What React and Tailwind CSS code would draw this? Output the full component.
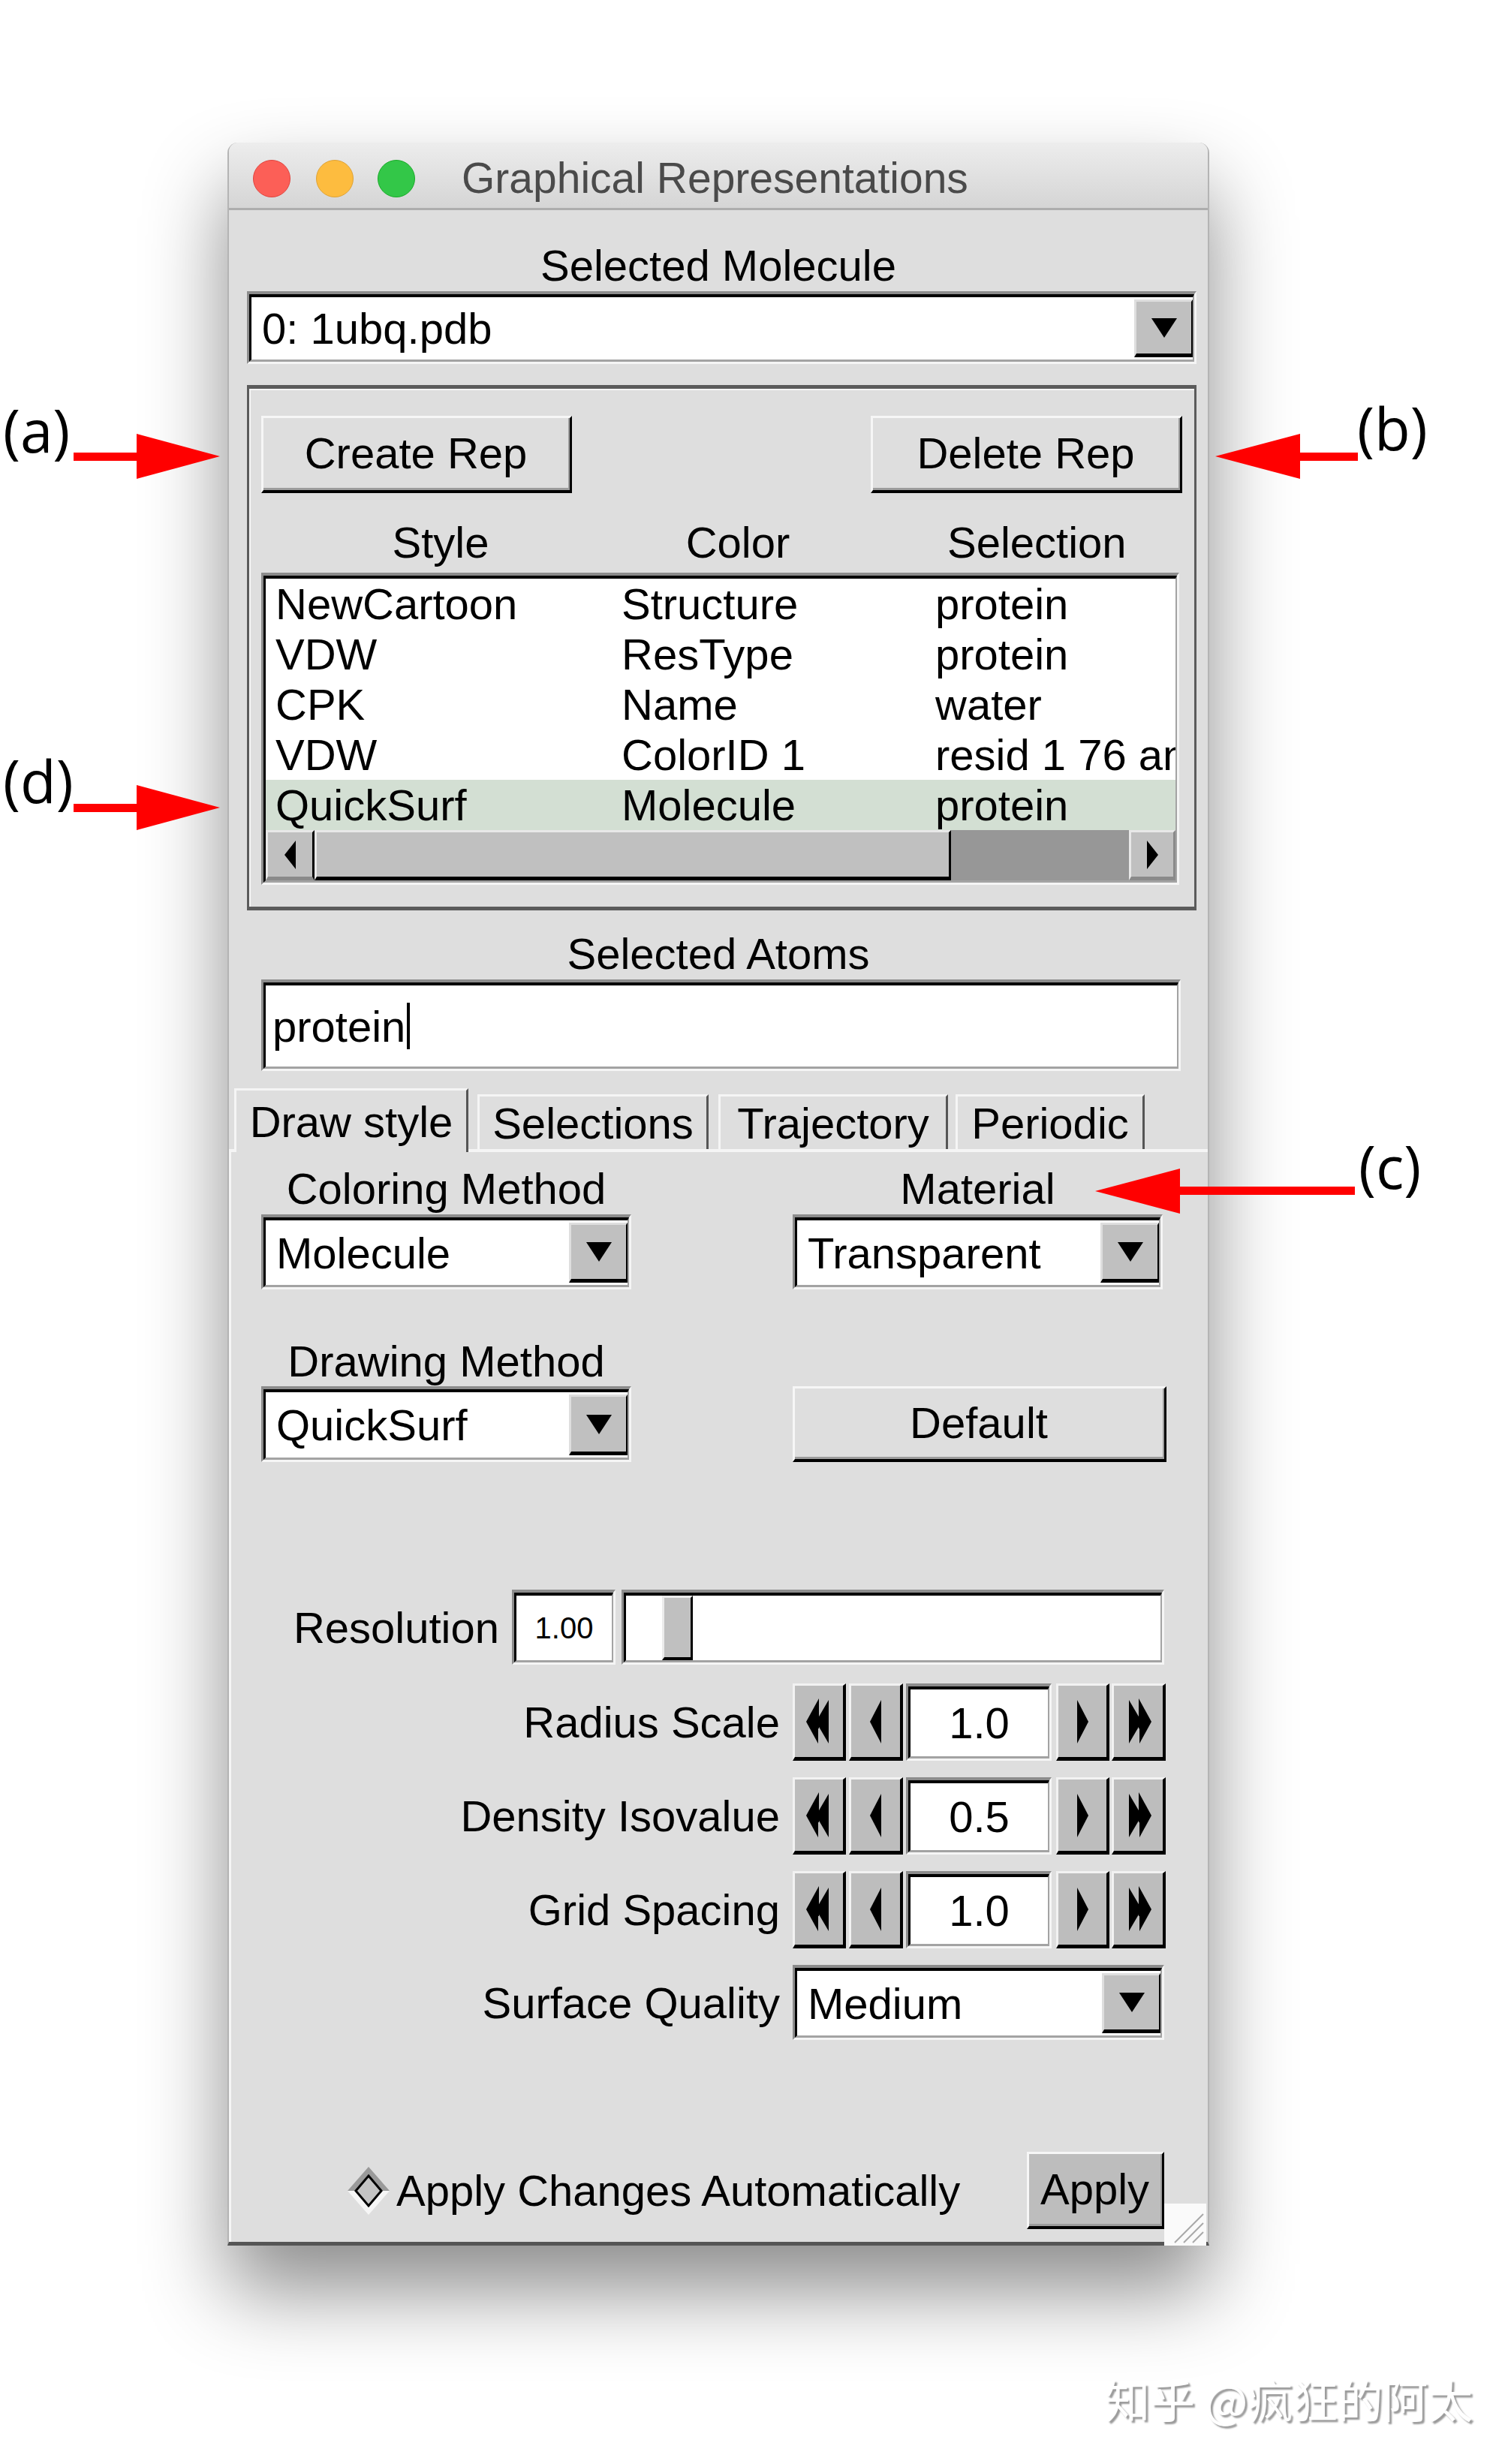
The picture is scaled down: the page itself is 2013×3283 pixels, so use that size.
import React from "react";

const FONT = "font-['Liberation_Sans','Arial',sans-serif]";

// sunken X11-style field: grey/black on top-left, light on bottom-right
function Sunken({ className = "", inner = "", children }) {
  return (
    <div
      className={`border-t-[4px] border-l-[3px] border-b-[3px] border-r-[3px] border-t-[#8c8c8c] border-l-[#8c8c8c] border-b-[#f5f5f5] border-r-[#f5f5f5] ${className}`}
    >
      <div
        className={`h-full border-t-[4px] border-l-[3px] border-b-[3px] border-r-[2px] border-t-black border-l-black border-b-[#a3a3a3] border-r-[#a3a3a3] bg-white ${inner}`}
      >
        {children}
      </div>
    </div>
  );
}

function Raised({ className = "", children }) {
  return (
    <div
      className={`border-t-[3px] border-l-[3px] border-b-[4px] border-r-[3px] border-t-[#f6f6f6] border-l-[#f6f6f6] border-b-black border-r-black ${className}`}
    >
      <div className="flex h-full items-center justify-center border-b-[3px] border-r-[2px] border-b-[#9c9c9c] border-r-[#9c9c9c]">
        {children}
      </div>
    </div>
  );
}

function DropBtn() {
  return (
    <div className="my-[3px] flex w-[78px] shrink-0 items-center justify-center border-t-[3px] border-l-[3px] border-b-[5px] border-r-[2px] border-t-[#dedede] border-l-[#dedede] border-b-black border-r-black bg-[#c0c0c0]">
      <svg width="34" height="26" viewBox="0 0 34 26">
        <polygon points="0,0 34,0 17,26" fill="#000" />
      </svg>
    </div>
  );
}

function Dropdown({ value, className = "" }) {
  return (
    <Sunken className={className} inner="flex items-stretch">
      <div className="flex flex-1 items-center overflow-hidden whitespace-nowrap pl-[14px]">{value}</div>
      <DropBtn />
    </Sunken>
  );
}

function SpinBtn({ className = "", children }) {
  return (
    <div
      className={`flex h-full items-center justify-center border-t-[3px] border-l-[3px] border-b-[5px] border-r-[4px] border-t-[#f2f2f2] border-l-[#f2f2f2] border-b-black border-r-black bg-[#bdbdbd] ${className}`}
    >
      {children}
    </div>
  );
}

const DblLeft = () => (
  <svg width="34" height="66" viewBox="0 0 34 66">
    <polygon points="0,33 17,2 17,64" fill="#000" />
    <polygon points="13,33 30,4 30,62" fill="#000" />
    <rect x="16" y="42" width="2" height="22" fill="#bdbdbd" />
  </svg>
);
const Left = () => (
  <svg width="16" height="66" viewBox="0 0 16 66">
    <polygon points="0,33 15,4 15,62" fill="#000" />
  </svg>
);
const Right = () => (
  <svg width="16" height="66" viewBox="0 0 16 66">
    <polygon points="16,33 1,4 1,62" fill="#000" />
  </svg>
);
const DblRight = () => (
  <svg width="34" height="66" viewBox="0 0 34 66">
    <polygon points="34,33 17,2 17,64" fill="#000" />
    <polygon points="21,33 4,4 4,62" fill="#000" />
    <rect x="16" y="42" width="2" height="22" fill="#bdbdbd" />
  </svg>
);

function Spinner({ label, value }) {
  return (
    <div className="flex h-[103px] items-center justify-end pr-[56px]">
      <span className="mr-[17px]">{label}</span>
      <div className="flex h-full w-[497px] items-stretch">
        <SpinBtn className="w-[71px]"><DblLeft /></SpinBtn>
        <SpinBtn className="ml-[4px] w-[72px]"><Left /></SpinBtn>
        <Sunken className="ml-[4px] w-[194px]" inner="flex items-center justify-center">
          {value}
        </Sunken>
        <SpinBtn className="ml-[6px] w-[71px]"><Right /></SpinBtn>
        <SpinBtn className="ml-[3px] w-[72px]"><DblRight /></SpinBtn>
      </div>
    </div>
  );
}

function RightArrow({ className }) {
  return (
    <svg className={className} width="195" height="60" viewBox="0 0 195 60">
      <rect x="0" y="25" width="86" height="11" fill="#ff0000" />
      <polygon points="84,0 195,30 84,60" fill="#ff0000" />
    </svg>
  );
}

const rows = [
  ["NewCartoon", "Structure", "protein"],
  ["VDW", "ResType", "protein"],
  ["CPK", "Name", "water"],
  ["VDW", "ColorID 1", "resid 1 76 and name CA"],
  ["QuickSurf", "Molecule", "protein"],
];

export default function App() {
  return (
    <div className={`relative h-[3283px] w-[2013px] overflow-hidden bg-white text-[58px] leading-[67px] text-black ${FONT}`}>
      <div className="pl-[303px] pt-[190px]">
        <div className="relative flex h-[2802px] w-[1308px] flex-col rounded-t-[14px] border-x-2 border-b-[5px] border-x-[#b4b4b4] border-b-[#555] bg-[#dedede] shadow-[0_60px_110px_rgba(0,0,0,0.45)]">
          {/* title bar */}
          <div className="flex h-[90px] shrink-0 items-center rounded-t-[12px] border-b-[3px] border-[#adadad] bg-linear-to-b from-[#ededed] to-[#d5d5d5] pl-[32px] pt-[8px]">
            <div className="h-[50px] w-[50px] rounded-full border border-[#e0443e] bg-[#fc5f57]" />
            <div className="ml-[34px] h-[50px] w-[50px] rounded-full border border-[#dea236] bg-[#fdbc3f]" />
            <div className="ml-[32px] h-[50px] w-[50px] rounded-full border border-[#1aab29] bg-[#33c748]" />
            <span className="ml-[62px] text-[57px] text-[#4a4a4a]">Graphical Representations</span>
          </div>

          <div className="mt-[40px] text-center">Selected Molecule</div>
          <Dropdown value="0: 1ubq.pdb" className="ml-[24px] mt-[1px] h-[97px] w-[1265px]" />

          {/* rep group */}
          <div className="ml-[24px] mt-[28px] h-[700px] w-[1265px] border-t-[5px] border-b-[5px] border-l-[3px] border-r-[3px] border-[#5b5b5b]">
            <div className="h-full border-t-2 border-l-2 border-[#f5f5f5] pt-[34px]">
              <div className="flex justify-between pl-[14px] pr-[16px]">
                <Raised className="h-[103px] w-[414px]">Create Rep</Raised>
                <Raised className="h-[103px] w-[415px]">Delete Rep</Raised>
              </div>
              <div className="ml-[14px] mt-[32px] flex">
                <div className="w-[478px] text-center">Style</div>
                <div className="w-[314px] text-center">Color</div>
                <div className="pl-[122px]">Selection</div>
              </div>
              <Sunken className="ml-[14px] mt-[7px] w-[1223px]" inner="flex flex-col overflow-hidden">
                {rows.map(([s, c, sel], i) => (
                  <div
                    key={i}
                    className={`grid h-[67px] grid-cols-[461px_418px_1fr] whitespace-nowrap pl-[13px] ${i === 4 ? "bg-[#d3dfd3]" : ""}`}
                  >
                    <span>{s}</span>
                    <span>{c}</span>
                    <span className="overflow-hidden">{sel}</span>
                  </div>
                ))}
                <div className="flex h-[67px] bg-[#979797]">
                  <div className="flex w-[65px] items-center justify-center border-t-[3px] border-l-[3px] border-b-[5px] border-r-[3px] border-t-[#e8e8e8] border-l-[#e8e8e8] border-b-[#8a8a8a] border-r-black bg-[#c0c0c0]">
                    <svg width="16" height="38" viewBox="0 0 16 38"><polygon points="0,19 15,0 15,38" fill="#000" /></svg>
                  </div>
                  <div className="w-[848px] border-t-[3px] border-l-[3px] border-b-[5px] border-r-[3px] border-t-[#e8e8e8] border-l-[#e8e8e8] border-b-black border-r-black bg-[#c0c0c0]" />
                  <div className="flex-1" />
                  <div className="flex w-[62px] items-center justify-center border-t-[3px] border-l-[3px] border-b-[5px] border-r-[3px] border-t-[#e8e8e8] border-l-[#e8e8e8] border-b-[#8a8a8a] border-r-[#8a8a8a] bg-[#c0c0c0]">
                    <svg width="16" height="38" viewBox="0 0 16 38"><polygon points="16,19 1,0 1,38" fill="#000" /></svg>
                  </div>
                </div>
              </Sunken>
            </div>
          </div>

          <div className="mt-[24px] text-center">Selected Atoms</div>
          <Sunken className="ml-[43px] mt-[1px] h-[122px] w-[1225px]" inner="flex items-center pl-[9px]">
            <span>protein</span>
            <span className="ml-[2px] h-[62px] w-[4px] bg-black" />
          </Sunken>

          {/* tabs */}
          <div className="mt-[23px] flex items-end border-b-[4px] border-[#f5f5f5] pl-[7px]">
            <div className="relative z-10 -mb-[4px] flex h-[85px] w-[312px] items-center justify-center border-t-[3px] border-l-[3px] border-r-[3px] border-t-[#f5f5f5] border-l-[#f5f5f5] border-r-[#555] bg-[#dedede]">
              Draw style
            </div>
            <div className="ml-[12px] flex h-[73px] w-[308px] items-center justify-center border-t-[3px] border-l-[3px] border-r-[3px] border-t-[#f5f5f5] border-l-[#f5f5f5] border-r-[#555]">
              Selections
            </div>
            <div className="ml-[13px] flex h-[73px] w-[306px] items-center justify-center border-t-[3px] border-l-[3px] border-r-[3px] border-t-[#f5f5f5] border-l-[#f5f5f5] border-r-[#555]">
              Trajectory
            </div>
            <div className="ml-[10px] flex h-[73px] w-[252px] items-center justify-center border-t-[3px] border-l-[3px] border-r-[3px] border-t-[#f5f5f5] border-l-[#f5f5f5] border-r-[#555]">
              Periodic
            </div>
          </div>

          <div className="flex flex-1 flex-col border-l-[3px] border-[#f5f5f5]">
            <div className="mt-[15px] grid grid-cols-[493px_493px] gap-x-[215px] pl-[40px]">
              <div className="text-center">Coloring Method</div>
              <div className="text-center">Material</div>
              <Dropdown value="Molecule" className="mt-[1px] h-[100px]" />
              <Dropdown value="Transparent" className="mt-[1px] h-[100px]" />
              <div className="mt-[62px] text-center">Drawing Method</div>
              <div />
              <Dropdown value="QuickSurf" className="h-[101px]" />
              <Raised className="h-[101px] w-[498px]">Default</Raised>
            </div>

            {/* resolution */}
            <div className="mt-[170px] flex h-[100px] items-center justify-end pr-[58px]">
              <span className="mr-[17px]">Resolution</span>
              <Sunken className="h-full w-[138px]" inner="flex items-center justify-center text-[40px]">
                1.00
              </Sunken>
              <Sunken className="ml-[8px] h-full w-[723px]" inner="flex">
                <div className="ml-[48px] h-full w-[41px] border-t-[3px] border-l-[3px] border-b-[4px] border-r-[3px] border-t-[#ececec] border-l-[#ececec] border-b-black border-r-black bg-[#c0c0c0]" />
              </Sunken>
            </div>

            <div className="mt-[25px]"><Spinner label="Radius Scale" value="1.0" /></div>
            <div className="mt-[22px]"><Spinner label="Density Isovalue" value="0.5" /></div>
            <div className="mt-[22px]"><Spinner label="Grid Spacing" value="1.0" /></div>

            <div className="mt-[22px] flex h-[100px] items-center justify-end pr-[58px]">
              <span className="mr-[17px]">Surface Quality</span>
              <Dropdown value="Medium" className="h-full w-[495px]" />
            </div>

            {/* apply row */}
            <div className="mt-[149px] flex h-[103px] items-center pl-[155px] pr-[58px]">
              <svg width="56" height="64" viewBox="0 0 56 64">
                <polygon points="28,0 56,32 0,32" fill="#9a9a9a" />
                <polygon points="0,32 56,32 28,64" fill="#f6f6f6" />
                <polygon points="28,12 45,32 28,52 11,32" fill="#c4c4c4" stroke="#000" strokeWidth="3" />
              </svg>
              <span className="ml-[9px]">Apply Changes Automatically</span>
              <Raised className="ml-auto h-full w-[183px] bg-[#bdbdbd]">Apply</Raised>
            </div>
          </div>

          {/* resize grip */}
          <div className="absolute -bottom-[5px] right-[2px] h-[56px] w-[56px] bg-[#fafafa]">
            <svg width="56" height="56" viewBox="0 0 56 56">
              <line x1="52" y1="14" x2="14" y2="52" stroke="#a8a8a8" strokeWidth="2" />
              <line x1="52" y1="26" x2="26" y2="52" stroke="#a8a8a8" strokeWidth="2" />
              <line x1="52" y1="38" x2="38" y2="52" stroke="#a8a8a8" strokeWidth="2" />
            </svg>
          </div>
        </div>
      </div>

      {/* annotations */}
      <div className="absolute left-[4px] top-[534px] font-['Open_Sans',sans-serif] text-[78px] leading-none">(a)</div>
      <RightArrow className="absolute left-[98px] top-[578px]" />
      <div className="absolute left-[4px] top-[1001px] font-['Open_Sans',sans-serif] text-[78px] leading-none">(d)</div>
      <RightArrow className="absolute left-[98px] top-[1046px]" />

      <div className="absolute left-[1808px] top-[531px] font-['Open_Sans',sans-serif] text-[78px] leading-none">(b)</div>
      <svg className="absolute left-[1619px] top-[578px]" width="190" height="60" viewBox="0 0 190 60">
        <polygon points="0,30 113,0 113,60" fill="#ff0000" />
        <rect x="111" y="25" width="79" height="11" fill="#ff0000" />
      </svg>

      <div className="absolute left-[1810px] top-[1515px] font-['Open_Sans',sans-serif] text-[78px] leading-none">(c)</div>
      <svg className="absolute left-[1459px] top-[1557px]" width="346" height="60" viewBox="0 0 346 60">
        <polygon points="0,30 113,0 113,60" fill="#ff0000" />
        <rect x="111" y="24" width="235" height="11" fill="#ff0000" />
      </svg>

      <div className="absolute left-[1472px] top-[3166px] font-['Noto_Sans_CJK_SC',sans-serif] text-[60px] leading-none text-white [text-shadow:3px_3px_2px_#9a9a9a]">
        知乎 @疯狂的阿太
      </div>
    </div>
  );
}
